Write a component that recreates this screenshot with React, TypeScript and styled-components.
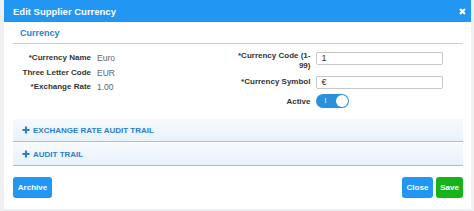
import React from 'react';
import styled, {createGlobalStyle} from 'styled-components';

const GlobalStyle = createGlobalStyle`
  body {
    margin: 0;
    background: #eef0f2;
    font-family: 'Liberation Sans', Arial, sans-serif;
  }
`;

const Modal = styled.div`
  width: 467px;
  height: 209px;
  margin-left: 4px;
  background: #fff;
  display: flex;
  flex-direction: column;
`;

const Header = styled.div`
  height: 22px;
  background: #2196f3;
  color: #fff;
  display: flex;
  align-items: center;
  justify-content: space-between;
  padding: 0 5px 0 9px;
  font-size: 9.5px;
  font-weight: bold;
`;

const Body = styled.div`
  padding: 0 8px 0 9px;
  display: flex;
  flex-direction: column;
`;

const SectionTitle = styled.div`
  height: 21px;
  padding-left: 7px;
  display: flex;
  align-items: center;
  border-bottom: 1px solid #b7d3ec;
  color: #1f7fd4;
  font-size: 9px;
  font-weight: bold;
`;

const FormGrid = styled.div`
  display: grid;
  grid-template-columns: 225px 1fr;
  padding-top: 7px;
  height: 58px;
`;

const LeftFields = styled.div`
  display: grid;
  grid-template-columns: 78px 1fr;
  grid-auto-rows: 14.5px;
  column-gap: 6px;
  align-items: center;
  font-size: 8px;
`;

const RightFields = styled.div`
  display: grid;
  grid-template-columns: 1fr 127px;
  column-gap: 6px;
  padding-right: 20px;
  font-size: 8px;
`;

const Label = styled.div<{$lines?: boolean}>`
  text-align: right;
  font-weight: bold;
  color: #333;
  line-height: 10px;
  white-space: nowrap;
  align-self: ${p => p.$lines ? 'start' : 'center'};
`;

const Value = styled.div`
  color: #666;
  font-size: 8.5px;
`;

const Input = styled.div<{$top: number}>`
  height: 11px;
  margin-top: ${p => p.$top}px;
  border: 1px solid #c8c8c8;
  border-radius: 2px;
  padding-left: 4px;
  font-size: 9px;
  line-height: 11px;
  color: #333;
`;

const Toggle = styled.div`
  width: 33px;
  height: 14px;
  margin-top: 5px;
  border-radius: 7px;
  background: #2a8fdc;
  position: relative;
  color: #fff;
  font-size: 7px;
  line-height: 14px;
  padding-left: 8px;
  box-sizing: border-box;
  &::after {
    content: '';
    position: absolute;
    right: 1px;
    top: 1px;
    width: 12px;
    height: 12px;
    border-radius: 50%;
    background: #fff;
  }
`;

const Panels = styled.div`
  margin-top: 10px;
  display: flex;
  flex-direction: column;
  gap: 1px;
`;

const Panel = styled.div`
  height: 22px;
  display: flex;
  align-items: center;
  gap: 3px;
  padding-left: 9px;
  background: linear-gradient(#f6fafd, #e8f2fb);
  border-bottom: 1px solid #9cc2e3;
  color: #2a7ed0;
  font-size: 8px;
  font-weight: bold;
`;

const Footer = styled.div`
  margin-top: 11px;
  display: flex;
  gap: 3px;
`;

const Button = styled.div<{$green?: boolean, $w: number}>`
  width: ${p => p.$w}px;
  height: 21px;
  border-radius: 3px;
  background: ${p => p.$green ? '#17b31a' : '#2196f3'};
  color: #fff;
  font-size: 8px;
  font-weight: bold;
  display: flex;
  align-items: center;
  justify-content: center;
  &:first-child {
    margin-right: auto;
  }
`;

const Plus = () => (
  <svg width="8" height="8" viewBox="0 0 8 8">
    <path d="M4 0.5V7.5M0.5 4H7.5" stroke="#2a7ed0" strokeWidth="2" />
  </svg>
);

const App: React.FC = () => {
  return (
    <>
      <GlobalStyle />
      <Modal>
        <Header>
          <span>Edit Supplier Currency</span>
          <svg width="7" height="7" viewBox="0 0 7 7">
            <path d="M1 1L6 6M6 1L1 6" stroke="#fff" strokeWidth="2" />
          </svg>
        </Header>
        <Body>
          <SectionTitle>Currency</SectionTitle>
          <FormGrid>
            <LeftFields>
              <Label>*Currency Name</Label>
              <Value>Euro</Value>
              <Label>Three Letter Code</Label>
              <Value>EUR</Value>
              <Label>*Exchange Rate</Label>
              <Value>1.00</Value>
            </LeftFields>
            <RightFields>
              <Label $lines>*Currency Code (1-<br />99)</Label>
              <Input $top={1}>1</Input>
              <Label style={{marginTop: 4}}>*Currency Symbol</Label>
              <Input $top={4}>€</Input>
              <Label style={{marginTop: 5}}>Active</Label>
              <div><Toggle>I</Toggle></div>
            </RightFields>
          </FormGrid>
          <Panels>
            <Panel><Plus />EXCHANGE RATE AUDIT TRAIL</Panel>
            <Panel><Plus />AUDIT TRAIL</Panel>
          </Panels>
          <Footer>
            <Button $w={39}>Archive</Button>
            <Button $w={31}>Close</Button>
            <Button $w={27} $green>Save</Button>
          </Footer>
        </Body>
      </Modal>
    </>
  );
};

export default App;
